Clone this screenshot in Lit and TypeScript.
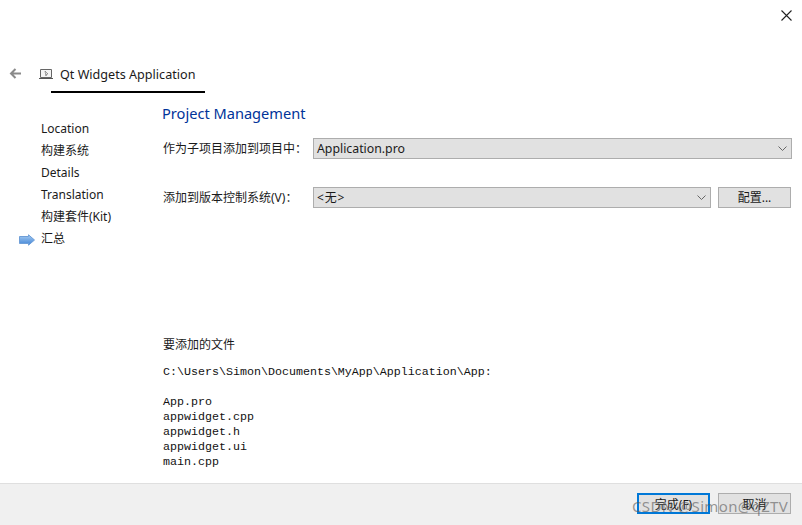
import { LitElement, html, css } from "lit";
import { customElement } from "lit/decorators.js";

const chevron = html`<svg class="chev" width="9" height="5" viewBox="0 0 9 5"><path d="M.5.5l4 4 4-4" fill="none" stroke="#666" stroke-width="1"/></svg>`;

@customElement("app-root")
export class AppRoot extends LitElement {
  static styles = css`
    :host {
      display: flex; flex-direction: column; width: 802px; height: 525px; background: #fff; position: relative; overflow: hidden;
      font-family: "Noto Sans", "Noto Sans CJK SC", sans-serif; font-size: 12px; color: #1a1a1a;
    }
    .close { display: flex; justify-content: flex-end; padding: 10px 10px 0 0; height: 14px; }
    .header { display: flex; align-items: center; margin-top: 39px; height: 22px; padding-left: 9px; }
    .back { margin-right: 18px; position: relative; top: -1px; }
    .mon { margin-right: 7px; }
    .title { font-size: 12.6px; }
    .rule { width: 154px; height: 2px; background: #000; margin: 6px 0 0 51px; }
    .body { flex: 1; display: flex; min-height: 0; }
    .side { width: 163px; flex: none; padding-top: 25px; box-sizing: border-box; }
    .step { height: 22px; line-height: 22px; padding-left: 41px; position: relative; }
    .arrow { position: absolute; left: 19px; top: 6px; }
    .main { flex: 1; min-width: 0; padding-right: 10px; }
    h1 { margin: 9px 0 0 -1px; font-weight: 400; font-size: 14.6px; line-height: 22px; color: #003399; }
    .row { display: flex; align-items: center; height: 22px; }
    .r1 { margin-top: 13px; }
    .r2 { margin-top: 27px; }
    .label { width: 150px; flex: none; }
    .combo {
      flex: 1; height: 21px; box-sizing: border-box; border: 1px solid #adadad; background: #e1e1e1;
      display: flex; align-items: center; justify-content: space-between; padding: 0 4px 0 3px;
    }
    .r1 .combo { font-size: 12.3px; }
    .r2 .combo span { letter-spacing: .8px; }
    .btn {
      width: 73px; height: 21px; box-sizing: border-box; border: 1px solid #adadad; background: #e1e1e1;
      display: flex; align-items: center; justify-content: center; flex: none;
    }
    .r2 .btn { margin-left: 7px; margin-right: 1px; }
    .files-title { margin-top: 128px; line-height: 18px; }
    pre {
      margin: 11px 0 0; font-family: "Liberation Mono", monospace; font-size: 11.67px; line-height: 15px; color: #111;
    }
    .footer {
      height: 42px; flex: none; box-sizing: border-box; background: #f0f0f0; border-top: 1px solid #dfdfdf;
      display: flex; justify-content: flex-end; align-items: flex-start; gap: 8px; padding: 9px 11px 0 0;
    }
    .default { border: 2px solid #0078d7; }
    .mark {
      position: absolute; left: 632px; top: 497px; font-size: 15px; line-height: 18px; color: rgba(90,90,90,.62); white-space: nowrap; letter-spacing: .35px;
    }
  `;

  render() {
    const steps = ["Location", "构建系统", "Details", "Translation", "构建套件(Kit)", "汇总"];
    return html`
      <div class="close">
        <svg width="11" height="11" viewBox="0 0 11 11"><path d="M.5.5l10 10M10.5.5l-10 10" stroke="#222" stroke-width="1.1" fill="none"/></svg>
      </div>
      <div class="header">
        <svg class="back" width="12" height="11" viewBox="0 0 12 11"><path d="M12 5.500H2M6.500 1L2 5.500 6.500 10" fill="none" stroke="#8a8a8a" stroke-width="2"/></svg>
        <svg class="mon" width="14" height="12" viewBox="0 0 14 12"><path d="M1.500 1.500h11v8h-11z" fill="#f4f4f4" stroke="#666"/><path d="M0 10.500h14" stroke="#555"/><path d="M6 3l3 3H7.500L7 8z" fill="#fff" stroke="#777" stroke-width=".7"/></svg>
        <span class="title">Qt Widgets Application</span>
      </div>
      <div class="rule"></div>
      <div class="body">
        <div class="side">
          ${steps.map((s, i) => html`<div class="step">${i === 5 ? html`<svg class="arrow" width="16" height="12" viewBox="0 0 16 12"><defs><linearGradient id="g" x1="0" y1="0" x2="0" y2="1"><stop offset="0" stop-color="#a8cdf2"/><stop offset="1" stop-color="#3f83d6"/></linearGradient></defs><path d="M.5 2.500h9V.8L15.500 6l-6 5.200V9.500h-9z" fill="url(#g)" stroke="#6f9fd8"/></svg>` : ""}${s}</div>`)}
        </div>
        <div class="main">
          <h1>Project Management</h1>
          <div class="row r1"><div class="label">作为子项目添加到项目中：</div><div class="combo"><span>Application.pro</span>${chevron}</div></div>
          <div class="row r2"><div class="label">添加到版本控制系统(V)：</div><div class="combo"><span>&lt;无&gt;</span>${chevron}</div><div class="btn">配置...</div></div>
          <div class="files-title">要添加的文件</div>
          <pre>C:\\Users\\Simon\\Documents\\MyApp\\Application\\App:

App.pro
appwidget.cpp
appwidget.h
appwidget.ui
main.cpp</pre>
        </div>
      </div>
      <div class="footer">
        <div class="btn default">完成(F)</div>
        <div class="btn">取消</div>
      </div>
      <div class="mark">CSDN @Simon@qZTV</div>
    `;
  }
}
